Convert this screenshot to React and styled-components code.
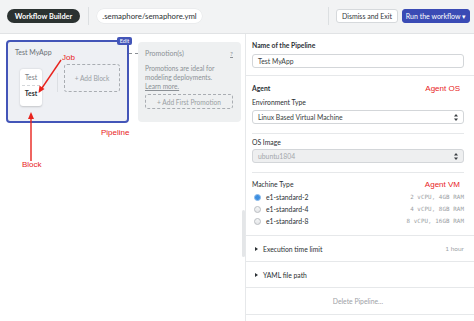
import React from "react";
import styled, { createGlobalStyle } from "styled-components";

const Global = createGlobalStyle`
  html, body { margin: 0; padding: 0; background: #fff; }
  body { font-family: Lato, "Noto Sans", sans-serif; -webkit-font-smoothing: antialiased; }
  * { box-sizing: border-box; }
`;

const Page = styled.div`
  width: 474px;
  height: 321px;
  display: flex;
  flex-direction: column;
  overflow: hidden;
  background: #fff;
`;

const Header = styled.header`
  height: 34px;
  flex: none;
  display: flex;
  align-items: center;
  padding: 0 4px 1px 7px;
  background: #f2f3f4;
  border-bottom: 1px solid #e1e3e5;
`;

const Pill = styled.div`
  height: 14px;
  width: ${(p) => p.$w};
  border-radius: 7px;
  display: flex;
  align-items: center;
  justify-content: center;
  font-size: ${(p) => (p.$dark ? "7.3px" : "7.8px")};
  font-weight: ${(p) => (p.$dark ? 700 : 400)};
  color: ${(p) => (p.$dark ? "#fff" : "#2d3236")};
  background: ${(p) => (p.$dark ? "#2b3231" : "#fff")};
  box-shadow: ${(p) => (p.$dark ? "none" : "0 0 0 0.5px #e3e5e7")};
  white-space: nowrap;
`;

const VSep = styled.div`
  width: 1px;
  height: 18px;
  background: #dcdfe1;
  margin: 0 ${(p) => p.$m || "8px"};
`;

const Spacer = styled.div`
  flex: 1;
`;

const Button = styled.div`
  height: 14px;
  width: ${(p) => p.$w};
  border-radius: 3px;
  display: flex;
  align-items: center;
  justify-content: center;
  font-size: 7px;
  white-space: nowrap;
  color: ${(p) => (p.$primary ? "#fff" : "#30363a")};
  background: ${(p) => (p.$primary ? "#3a4bb5" : "#fff")};
  border: 1px solid ${(p) => (p.$primary ? "#3a4bb5" : "#d6d9dc")};
  margin-left: ${(p) => p.$ml || "0"};
`;

const Main = styled.div`
  flex: 1;
  display: flex;
  min-height: 0;
`;

const Canvas = styled.div`
  position: relative;
  width: 246px;
  flex: none;
  border-right: 1px solid #e6e8ea;
  padding: 6px 0 0 6px;
  display: flex;
  align-items: flex-start;
`;

const PipelineCard = styled.div`
  position: relative;
  width: 123px;
  height: 83px;
  flex: none;
  border: 2px solid #4355b8;
  border-radius: 4px;
  background: #eef0f4;
  padding: 6px 0 0 7px;
`;

const EditBadge = styled.div`
  position: absolute;
  top: -5px;
  right: -5px;
  width: 15px;
  height: 8px;
  border-radius: 2px;
  background: #4355b8;
  color: #fff;
  font-size: 5.5px;
  line-height: 8px;
  text-align: center;
`;

const CardTitle = styled.div`
  font-size: 7px;
  line-height: 9px;
  color: #6b7176;
`;

const StageRow = styled.div`
  display: flex;
  align-items: flex-start;
  margin-top: 7px;
  padding-left: 5px;
`;

const Block = styled.div`
  width: 22px;
  height: 37px;
  margin-top: 5px;
  background: #fff;
  border-radius: 3px;
  box-shadow: 0 0.5px 2px rgba(0, 0, 0, 0.18);
  padding: 4px 2px 0;
`;

const JobTitle = styled.div`
  font-size: 6.8px;
  line-height: 9px;
  color: #7a8085;
  padding-bottom: 3px;
  border-bottom: 1px dashed #d4d7da;
  text-align: center;
`;

const JobName = styled.div`
  font-size: 6.8px;
  line-height: 9px;
  margin-top: 3px;
  font-weight: 700;
  color: #2c3135;
  text-align: center;
`;

const StageSep = styled.div`
  width: 1px;
  height: 19px;
  margin: 9px 6px 0 15px;
  background: #dcdfe3;
`;

const DashedBox = styled.div`
  width: ${(p) => p.$w};
  height: ${(p) => p.$h};
  border: 1px dashed #a9adb2;
  border-radius: 3px;
  display: flex;
  align-items: center;
  justify-content: center;
  font-size: 6.6px;
  color: #9a9fa4;
  white-space: nowrap;
  margin-top: ${(p) => p.$mt || "0"};
`;

const Connector = styled.div`
  width: 9px;
  flex: none;
  margin-top: 13px;
  border-top: 1px dashed #8a8f94;
`;

const PromoBox = styled.div`
  width: 103px;
  height: 80px;
  margin-top: 2px;
  flex: none;
  background: #eef0f1;
  border-radius: 4px;
  padding: 7px 8px 0 7px;
  color: #8b9095;
`;

const PromoHead = styled.div`
  display: flex;
  justify-content: space-between;
  font-size: 7px;
  line-height: 9px;
`;

const Help = styled.span`
  text-decoration: underline;
  font-size: 6.5px;
`;

const PromoText = styled.div`
  margin-top: 6px;
  font-size: 6.6px;
  line-height: 9px;
`;

const Link = styled.span`
  text-decoration: underline;
`;

const Annotation = styled.div`
  position: absolute;
  left: ${(p) => p.$x}px;
  top: ${(p) => p.$y}px;
  font-family: "Liberation Sans", Arial, sans-serif;
  font-size: 8px;
  line-height: 10px;
  color: #e8231d;
  white-space: nowrap;
`;

const Overlay = styled.svg`
  position: absolute;
  left: 0;
  top: 0;
  pointer-events: none;
`;

const Thumb = styled.div`
  position: absolute;
  right: 0;
  top: 176px;
  width: 3px;
  height: 47px;
  border-radius: 2px;
  background: #e4e6e8;
`;

const Sidebar = styled.aside`
  flex: 1;
  background: #fff;
  display: flex;
  flex-direction: column;
`;

const Section = styled.section`
  padding: ${(p) => p.$pad || "0 10px 0 6px"};
  border-bottom: 1px solid #e6e8ea;
  height: ${(p) => p.$h || "auto"};
`;

const Row = styled.div`
  display: flex;
  align-items: center;
  justify-content: space-between;
  height: ${(p) => p.$h || "9px"};
  margin-top: ${(p) => p.$mt || "0"};
`;

const Label = styled.div`
  font-size: 6.8px;
  line-height: 9px;
  font-weight: ${(p) => (p.$bold ? 700 : 400)};
  color: #2b3034;
  margin-top: ${(p) => p.$mt || "0"};
`;

const AnnotationInline = styled.span`
  font-family: "Liberation Sans", Arial, sans-serif;
  font-size: 8px;
  color: #e8231d;
  margin-right: 4px;
`;

const Field = styled.div`
  height: 14px;
  margin-top: ${(p) => p.$mt || "3px"};
  border: 1px solid #d3d6d9;
  border-radius: 3px;
  padding: 0 5px;
  display: flex;
  align-items: center;
  justify-content: space-between;
  font-size: 6.8px;
  color: ${(p) => (p.$disabled ? "#a3a7ab" : "#3a3f43")};
  background: ${(p) => (p.$disabled ? "#eeeff0" : "#fff")};
`;

const Divider = styled.div`
  height: 1px;
  background: #e6e8ea;
  margin-top: 9px;
`;

const RadioList = styled.div`
  margin-top: 2px;
`;

const RadioRow = styled.div`
  display: flex;
  align-items: center;
  height: 12px;
`;

const Radio = styled.span`
  width: 7px;
  height: 7px;
  border-radius: 50%;
  flex: none;
  margin: 0 5px 0 2px;
  background: ${(p) => (p.$on ? "#3d8fe1" : "linear-gradient(#f5f6f7, #e4e6e8)")};
  border: 1px solid ${(p) => (p.$on ? "#8fbdeb" : "#b9bdc1")};
`;

const MachineName = styled.span`
  font-size: 6.8px;
  color: #2b3034;
  flex: 1;
`;

const Spec = styled.span`
  font-family: "DejaVu Sans Mono", "Liberation Mono", monospace;
  font-size: 5.8px;
  color: #9a9ea3;
  letter-spacing: 0.1px;
`;

const Toggle = styled.div`
  display: flex;
  align-items: center;
  height: 100%;
  font-size: 6.8px;
  color: #2b3034;
`;

const Caret = styled.svg`
  margin: 0 5px 0 3px;
  flex: none;
`;

const Muted = styled.span`
  margin-left: auto;
  font-size: 6.5px;
  color: #a0a4a8;
`;

const DeleteRow = styled.div`
  height: 100%;
  display: flex;
  align-items: center;
  justify-content: center;
  font-size: 6.8px;
  color: #9da1a6;
`;

const machines = [
  { name: "e1-standard-2", spec: "2 vCPU, 4GB RAM", on: true },
  { name: "e1-standard-4", spec: "4 vCPU, 8GB RAM" },
  { name: "e1-standard-8", spec: "8 vCPU, 16GB RAM" },
];

function SelectArrows() {
  return (
    <svg width="4" height="7" viewBox="0 0 4 7">
      <polygon points="2,0 4,2.6 0,2.6" fill="#3a3f43" />
      <polygon points="0,4.4 4,4.4 2,7" fill="#3a3f43" />
    </svg>
  );
}

function TriangleRight() {
  return (
    <Caret width="3" height="4" viewBox="0 0 3 4">
      <polygon points="0,0 3,2 0,4" fill="#2b3034" />
    </Caret>
  );
}

export default function App() {
  return (
    <>
      <Global />
      <Page>
        <Header>
          <Pill $dark $w="73px">Workflow Builder</Pill>
          <VSep $m="8px" />
          <Pill $w="105px">.semaphore/semaphore.yml</Pill>
          <Spacer />
          <VSep $m="7px" />
          <Button $w="62px">Dismiss and Exit</Button>
          <Button $primary $w="68px" $ml="4px">Run the workflow ▾</Button>
        </Header>
        <Main>
          <Canvas>
            <PipelineCard>
              <EditBadge>Edit</EditBadge>
              <CardTitle>Test MyApp</CardTitle>
              <StageRow>
                <Block>
                  <JobTitle>Test</JobTitle>
                  <JobName>Test</JobName>
                </Block>
                <StageSep />
                <DashedBox $w="56px" $h="28px">+ Add Block</DashedBox>
              </StageRow>
            </PipelineCard>
            <Connector />
            <PromoBox>
              <PromoHead>
                <span>Promotion(s)</span>
                <Help>?</Help>
              </PromoHead>
              <PromoText>
                Promotions are ideal for
                <br />
                modeling deployments.
                <br />
                <Link>Learn more.</Link>
              </PromoText>
              <DashedBox $w="88px" $h="15px" $mt="3px">+ Add First Promotion</DashedBox>
            </PromoBox>

            <Annotation $x={62} $y={19}>Job</Annotation>
            <Annotation $x={101} $y={94}>Pipeline</Annotation>
            <Annotation $x={22} $y={126}>Block</Annotation>
            <Overlay width="246" height="287" viewBox="0 0 246 287">
              <line x1="61" y1="26" x2="42" y2="54" stroke="#e8231d" strokeWidth="1.4" />
              <polygon points="38.5,59 39.5,51.5 44.5,55" fill="#e8231d" />
              <line x1="31" y1="127" x2="31" y2="83" stroke="#e8231d" strokeWidth="1.4" />
              <polygon points="31,78 28,85 34,85" fill="#e8231d" />
            </Overlay>
            <Thumb />
          </Canvas>

          <Sidebar>
            <Section $pad="7px 10px 7px 6px">
              <Label $bold>Name of the Pipeline</Label>
              <Field $mt="4px">Test MyApp</Field>
            </Section>

            <Section $pad="8px 10px 8px 6px">
              <Row>
                <Label $bold>Agent</Label>
                <AnnotationInline>Agent OS</AnnotationInline>
              </Row>
              <Label $mt="5px">Environment Type</Label>
              <Field>
                <span>Linux Based Virtual Machine</span>
                <SelectArrows />
              </Field>
              <Divider />
              <Label $mt="4px">OS Image</Label>
              <Field $disabled $mt="2px">
                <span>ubuntu1804</span>
                <SelectArrows />
              </Field>
              <Divider />
              <Row $mt="7px">
                <Label>Machine Type</Label>
                <AnnotationInline>Agent VM</AnnotationInline>
              </Row>
              <RadioList>
                {machines.map((m) => (
                  <RadioRow key={m.name}>
                    <Radio $on={m.on} />
                    <MachineName>{m.name}</MachineName>
                    <Spec>{m.spec}</Spec>
                  </RadioRow>
                ))}
              </RadioList>
            </Section>

            <Section $h="26px">
              <Toggle>
                <TriangleRight />
                Execution time limit
                <Muted>1 hour</Muted>
              </Toggle>
            </Section>
            <Section $h="26px">
              <Toggle>
                <TriangleRight />
                YAML file path
              </Toggle>
            </Section>
            <Section $h="27px">
              <DeleteRow>Delete Pipeline…</DeleteRow>
            </Section>
          </Sidebar>
        </Main>
      </Page>
    </>
  );
}
